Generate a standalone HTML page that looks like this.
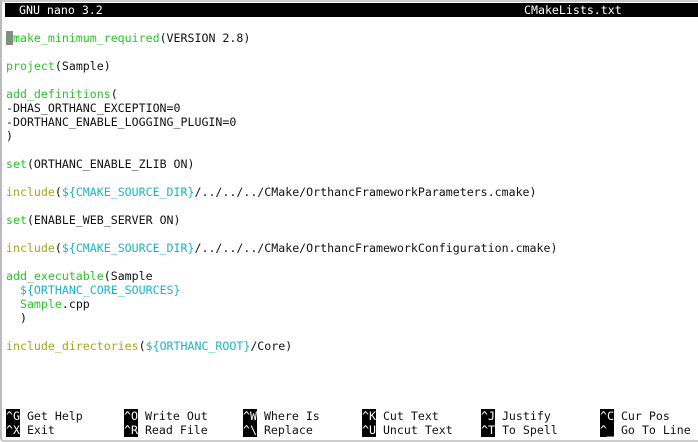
<!DOCTYPE html>
<html><head><meta charset="utf-8"><style>
html,body{margin:0;padding:0;background:#fff;width:698px;height:442px;overflow:hidden}
body{position:relative;font-family:"DejaVu Sans Mono","Liberation Mono",monospace;font-size:11.6px;color:#111}
.edge{position:absolute;left:0;top:0;width:698px;height:442px;box-sizing:border-box;border-left:2px solid #bbb;border-top:2px solid #ccc;border-bottom:2px solid #ccc;border-radius:0 0 0 4px}
.bar{position:absolute;left:5px;top:3px;width:693px;height:14px;background:#000;color:#fff}
.bar span{position:absolute;top:0;line-height:14px;white-space:pre}
pre{position:absolute;left:6px;margin:0;font:inherit;line-height:14px;white-space:pre}
.g{color:#2bc42b}.c{color:#1ab5c5}.y{color:#a6a61b}
.cur{background:#8a8a8a;color:#2bc42b}
.k{background:#000;color:#fff}
.s{position:absolute;line-height:14px;white-space:pre}
</style></head><body>
<div class="edge"></div>
<div class="bar"><span style="left:14px">GNU nano 3.2</span><span style="left:519px">CMakeLists.txt</span></div>
<pre style="top:31px">
<span class="cur">c</span><span class="g">make_minimum_required</span>(VERSION 2.8)

<span class="g">project</span>(Sample)

<span class="g">add_definitions</span>(
-DHAS_ORTHANC_EXCEPTION=0
-DORTHANC_ENABLE_LOGGING_PLUGIN=0
)

<span class="g">set</span>(ORTHANC_ENABLE_ZLIB ON)

<span class="y">include</span>(<span class="c">${CMAKE_SOURCE_DIR}</span>/../../../CMake/OrthancFrameworkParameters.cmake)

<span class="g">set</span>(ENABLE_WEB_SERVER ON)

<span class="y">include</span>(<span class="c">${CMAKE_SOURCE_DIR}</span>/../../../CMake/OrthancFrameworkConfiguration.cmake)

<span class="g">add_executable</span>(Sample
  <span class="c">${ORTHANC_CORE_SOURCES}</span>
  <span class="g">Sample</span>.cpp
  )

<span class="y">include_directories</span>(<span class="c">${ORTHANC_ROOT}</span>/Core)</pre>
<div class="s" style="left:6px;top:409px"><span class="k">^G</span> Get Help</div>
<div class="s" style="left:6px;top:423px"><span class="k">^X</span> Exit</div>
<div class="s" style="left:124px;top:409px"><span class="k">^O</span> Write Out</div>
<div class="s" style="left:124px;top:423px"><span class="k">^R</span> Read File</div>
<div class="s" style="left:243px;top:409px"><span class="k">^W</span> Where Is</div>
<div class="s" style="left:243px;top:423px"><span class="k">^\</span> Replace</div>
<div class="s" style="left:362px;top:409px"><span class="k">^K</span> Cut Text</div>
<div class="s" style="left:362px;top:423px"><span class="k">^U</span> Uncut Text</div>
<div class="s" style="left:481px;top:409px"><span class="k">^J</span> Justify</div>
<div class="s" style="left:481px;top:423px"><span class="k">^T</span> To Spell</div>
<div class="s" style="left:600px;top:409px"><span class="k">^C</span> Cur Pos</div>
<div class="s" style="left:600px;top:423px"><span class="k">^_</span> Go To Line</div>
</body></html>
